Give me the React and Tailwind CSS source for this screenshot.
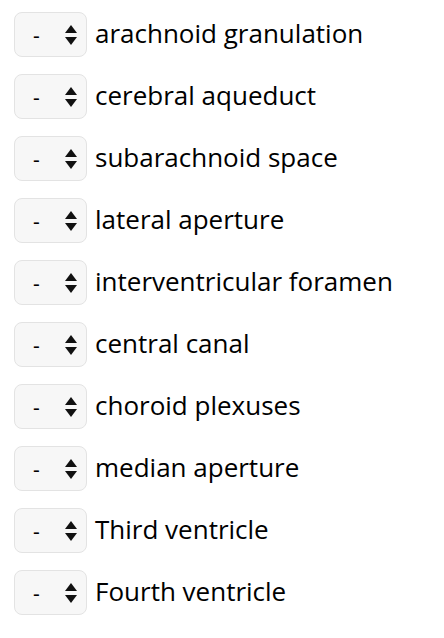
const items = [
  "arachnoid granulation",
  "cerebral aqueduct",
  "subarachnoid space",
  "lateral aperture",
  "interventricular foramen",
  "central canal",
  "choroid plexuses",
  "median aperture",
  "Third ventricle",
  "Fourth ventricle",
];

function SortArrows() {
  return (
    <svg width="12" height="20" viewBox="0 0 12 20" className="shrink-0">
      <path d="M6 0 L12 8 L0 8 Z" fill="#111" />
      <path d="M0 12 L12 12 L6 20 Z" fill="#111" />
    </svg>
  );
}

export default function App() {
  return (
    <div
      className="bg-white w-[444px] h-[638px] pt-[12px] pl-[14px] flex flex-col gap-[17px] text-black"
      style={{ fontFamily: '"Open Sans", "Noto Sans", sans-serif' }}
    >
      {items.map((label) => (
        <div key={label} className="flex items-center gap-2">
          <div className="w-[73px] h-[45px] rounded-lg border border-[#e3e3e3] bg-[#f7f7f7] flex items-center pl-[18px] pr-[9px] justify-between">
            <span className="text-[21px] leading-none translate-y-[1px]">-</span>
            <SortArrows />
          </div>
          <span className="text-[26px] leading-none -translate-y-[2px]">{label}</span>
        </div>
      ))}
    </div>
  );
}
